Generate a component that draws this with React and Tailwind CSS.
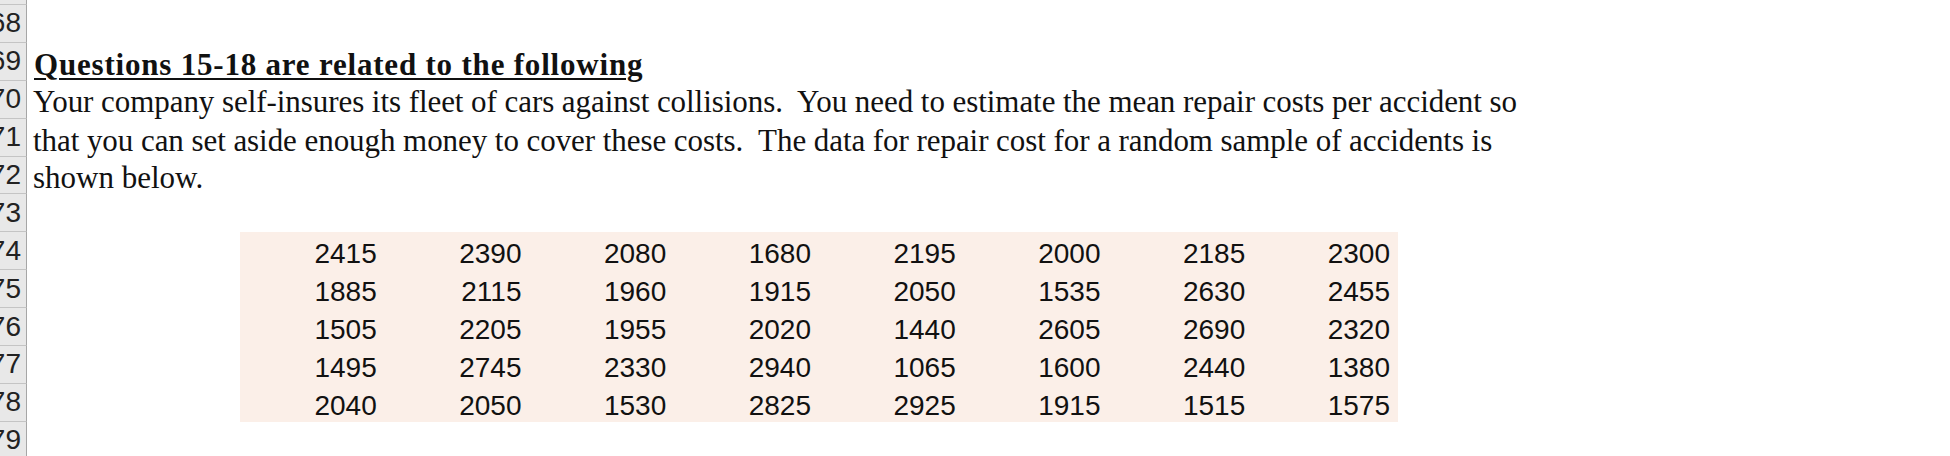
import React from "react";

const DATA = [
  [2415, 2390, 2080, 1680, 2195, 2000, 2185, 2300],
  [1885, 2115, 1960, 1915, 2050, 1535, 2630, 2455],
  [1505, 2205, 1955, 2020, 1440, 2605, 2690, 2320],
  [1495, 2745, 2330, 2940, 1065, 1600, 2440, 1380],
  [2040, 2050, 1530, 2825, 2925, 1915, 1515, 1575],
];

const serif = { fontFamily: '"Liberation Serif", "DejaVu Serif", serif' };

function RowHead({ n }) {
  return (
    <div className="w-[27px] shrink-0 h-full bg-[#e8e8e8] border-b border-b-[#c4c4c4] border-r border-r-[#a6a6a6] overflow-hidden flex items-center justify-end pr-[5px] font-['Liberation_Sans',sans-serif] text-[28px] leading-none text-[#222]">
      <span className="whitespace-nowrap">{n}</span>
    </div>
  );
}

function Row({ n, children }) {
  return (
    <div className="flex h-[37.9px]">
      <RowHead n={n} />
      <div className="flex-1 flex items-end min-w-0">{children}</div>
    </div>
  );
}

export default function App() {
  return (
    <div className="w-[1950px] h-[456px] bg-white overflow-hidden text-[#111]">
      <div className="flex h-[5px]">
        <div className="w-[27px] shrink-0 h-full bg-[#e8e8e8] border-b border-b-[#c4c4c4] border-r border-r-[#a6a6a6]" />
      </div>

      <Row n="68" />
      <Row n="69">
        <span
          style={serif}
          className="pl-[7px] pb-[1px] text-[31px] leading-none font-bold underline underline-offset-[3px] decoration-[2px] whitespace-nowrap tracking-[0.8px]"
        >
          Questions 15-18 are related to the following
        </span>
      </Row>
      <Row n="70">
        <span style={serif} className="pl-[6px] pb-[2px] text-[31px] leading-none whitespace-pre tracking-[-0.06px]">
          Your company self-insures its fleet of cars against collisions.  You need to estimate the mean repair costs per accident so
        </span>
      </Row>
      <Row n="71">
        <span style={serif} className="pl-[6px] pb-[1px] text-[31px] leading-none whitespace-pre tracking-[-0.06px]">
          that you can set aside enough money to cover these costs.  The data for repair cost for a random sample of accidents is
        </span>
      </Row>
      <Row n="72">
        <span style={serif} className="pl-[6px] pb-[1px] text-[31px] leading-none whitespace-pre">
          shown below.
        </span>
      </Row>
      <Row n="73" />

      {DATA.map((row, i) => (
        <Row key={i} n={String(74 + i)}>
          <div className="ml-[213px] w-[1158px] h-full bg-[#fbefe8] grid grid-cols-8 items-end">
            {row.map((v, j) => (
              <span
                key={j}
                className="text-right pr-[8px] pb-[2px] font-['Liberation_Sans',sans-serif] text-[28px] leading-none text-[#111]"
              >
                {v}
              </span>
            ))}
          </div>
        </Row>
      ))}

      <Row n="79" />
    </div>
  );
}
